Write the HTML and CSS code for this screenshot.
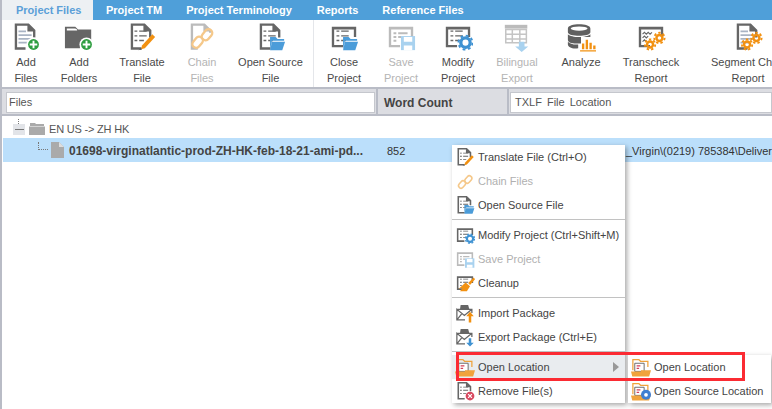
FILE: index.html
```html
<!DOCTYPE html>
<html lang="en">
<head>
<meta charset="utf-8">
<title>Project Files</title>
<link rel="stylesheet" href="styles.css">
</head>
<body>
<svg class="defs" width="0" height="0" aria-hidden="true">
  <defs>
    <symbol id="doc" viewBox="0 0 32 32"><path d="M4 1.500h15l7 7v8h-2.500v-6.500h-6v-6h-11v23h9v2.500h-11.500z" fill="#666"/></symbol>
    <symbol id="lines" viewBox="0 0 32 32"><path d="M8 9h8v2h-8zM8 13h14v2h-14zM8 17h14v2h-14zM8 21h10v2h-10z" fill="#a9b4c4"/></symbol>
    <symbol id="plus" viewBox="0 0 32 32"><circle cx="24" cy="24" r="7.500" fill="#fff"/><circle cx="24" cy="24" r="5.800" fill="#2f9e41"/><path d="M23 20h2v3h3v2h-3v3h-2v-3h-3v-2h3z" fill="#fff"/></symbol>
    <symbol id="form" viewBox="0 0 32 32"><path d="M8 9h3v1.500h-3zM13 9h8v1.500h-8zM8 14h3v1.500h-3zM13 14h8v1.500h-8zM8 19h3v1.500h-3zM13 19h5v1.500h-5z" fill="#666"/></symbol>
    <symbol id="pencil" viewBox="0 0 32 32"><path d="M27 13l3 3-11 12-4 1 1-4z" fill="#f29111"/><path d="M12 30l3-2 1 1z" fill="#555"/></symbol>
    <symbol id="link" viewBox="0 0 32 32"><g fill="none" stroke="#f5c88a" stroke-width="2.500"><rect x="5" y="18" width="13" height="8" rx="4" transform="rotate(-50 11 22)"/><rect x="15" y="10" width="13" height="8" rx="4" transform="rotate(-50 21 14)"/></g></symbol>
    <symbol id="bluefolder" viewBox="0 0 32 32"><path d="M15 16h6l2 2h7v2h-13l-2 9zM17 21h14l-3 9h-13z" fill="#4b9cd9"/></symbol>
    <symbol id="win" viewBox="0 0 32 32"><path d="M3 5h26v3h-26zM3 8h2.500v19h-2.500zM26.500 8h2.500v8h-2.500zM3 24.500h12v2.500h-12z" fill="#666"/></symbol>
    <symbol id="wingrey" viewBox="0 0 32 32"><path d="M3 5h26v3h-26zM3 8h2.500v19h-2.500zM26.500 8h2.500v8h-2.500zM3 24.500h12v2.500h-12z" fill="#bbb"/></symbol>
    <symbol id="formgrey" viewBox="0 0 32 32"><path d="M8 11h3v2h-3zM13 11h10v2h-10zM8 15h3v2h-3zM13 15h3v2h-3zM8 19h3v2h-3z" fill="#bbb"/></symbol>
    <symbol id="save" viewBox="0 0 32 32"><path d="M16 15h15v15h-15z" fill="#a9d2ef"/><path d="M19 16h9v5h-9zM19 25h9v5h-9z" fill="#fff"/></symbol>
    <symbol id="gear" viewBox="0 0 32 32"><circle cx="24" cy="22" r="5" fill="none" stroke="#3f92d2" stroke-width="3.500"/><circle cx="24" cy="22" r="7.500" fill="none" stroke="#3f92d2" stroke-width="2" stroke-dasharray="3 2.900"/></symbol>
    <symbol id="table" viewBox="0 0 32 32"><path d="M3 3h24v4h-24z" fill="#bbb"/><path d="M4 8h22v14h-22zM11 8v14M19 8v14M4 13h22M4 18h22" fill="none" stroke="#c4c4c4" stroke-width="1.600"/><path d="M18 21h6v5h4l-7 6-7-6h4z" fill="#a9d2ef"/></symbol>
    <symbol id="db" viewBox="0 0 32 32"><path d="M2 7c0-6 24-6 24 0v4c0 5-24 5-24 0zM2 13c4 4 20 4 24 0v3h-10v7h-5c-5 0-9-1-9-4zM2 21c2 2 5 3 9 3h2v4c-6 1-11-1-11-4z" fill="#606060"/><ellipse cx="14" cy="7" rx="9" ry="2.300" fill="#fff"/><path d="M15 30h17v1.500h-17zM17 23h2.500v6h-2.500zM21 19h2.500v10h-2.500zM25 22h2.500v7h-2.500zM29 25h2.500v4h-2.500z" fill="#f29111"/></symbol>
    <symbol id="gears" viewBox="0 0 32 32"><g fill="none" stroke="#f29111"><circle cx="15" cy="24" r="3.200" stroke-width="2.600"/><circle cx="15" cy="24" r="5.500" stroke-width="2" stroke-dasharray="2.500 2.300"/><circle cx="25" cy="17" r="3.200" stroke-width="2.600"/><circle cx="25" cy="17" r="5.500" stroke-width="2" stroke-dasharray="2.500 2.300"/></g></symbol>
    <symbol id="waves" viewBox="0 0 32 32"><path d="M7 13l2-2 2 2 2-2 2 2 2-2M7 17l2-2 2 2 2-2M7 21l2-2 2 2" fill="none" stroke="#666" stroke-width="1.200"/></symbol>
    <symbol id="broom" viewBox="0 0 32 32"><path d="M30 7l-9 9 3 3 8-9z" fill="#f29111"/><path d="M17 15l7 6-5 8H8l4-5-6 1z" fill="#f29111"/></symbol>
    <symbol id="mail" viewBox="0 0 32 32"><path d="M8 10l1-7h12l2 7z" fill="#666"/><path d="M3 10h24v6M16 27h-13v-17l12 10 12-10M3 27l8-10" fill="none" stroke="#666" stroke-width="2"/></symbol>
    <symbol id="up" viewBox="0 0 32 32"><path d="M24 14l6 7h-4v10h-4v-10h-4z" fill="#f29111"/></symbol>
    <symbol id="down" viewBox="0 0 32 32"><path d="M22 18h4v7h4l-6 6-6-6h4z" fill="#3f92d2"/></symbol>
    <symbol id="folderopen" viewBox="0 0 32 32"><path d="M2 3h11l3 3h12v10h-2V8H15l-3-3H4v16h-2z" fill="#f0a33c"/><path d="M6 10h15v13h-15z" fill="#fff" stroke="#666" stroke-width="1.500"/><path d="M9 13h6v2h-6zM9 17h4v2h-4z" fill="#d4405a"/><path d="M16 21h16l-3 10h-27l-2-8h16z" fill="#f0a33c"/></symbol>
    <symbol id="del" viewBox="0 0 32 32"><circle cx="24" cy="24" r="7" fill="#d8485f"/><path d="M21 21l6 6M27 21l-6 6" stroke="#fff" stroke-width="2"/></symbol>
    <symbol id="pin" viewBox="0 0 32 32"><circle cx="24" cy="22" r="8" fill="#3f7fd2"/><circle cx="24" cy="22" r="3" fill="#fff"/></symbol>
  </defs>
</svg>

<div class="app">
  <nav class="tabs">
    <span class="tab active">Project Files</span>
    <span class="tab">Project TM</span>
    <span class="tab">Project Terminology</span>
    <span class="tab">Reports</span>
    <span class="tab">Reference Files</span>
  </nav>

  <div class="toolbar">
    <div class="tool w48"><svg class="ticon"><use href="#doc"/><use href="#lines"/><use href="#plus"/></svg><span>Add<br>Files</span></div>
    <div class="tool w58"><svg class="ticon" viewBox="0 0 32 32"><path d="M1 5h11l3 3h14v14h-12v6h-16z" fill="#666"/><path d="M3 9h11v-1l-2-1h-9z" fill="#fff"/><use href="#plus"/></svg><span>Add<br>Folders</span></div>
    <div class="tool w68"><svg class="ticon"><use href="#doc"/><use href="#form"/><use href="#pencil"/></svg><span>Translate<br>File</span></div>
    <div class="tool w52 off"><svg class="ticon" viewBox="0 0 32 32"><path d="M4 1.500h15l7 7v3h-2.500v-1.500h-6v-6h-11v23h5v2.500h-7.500z" fill="#bbb"/><use href="#link"/></svg><span>Chain<br>Files</span></div>
    <div class="tool w86 sep"><svg class="ticon"><use href="#doc"/><use href="#form"/><use href="#bluefolder"/></svg><span>Open Source<br>File</span></div>
    <div class="tool w60"><svg class="ticon"><use href="#win"/><use href="#form"/><use href="#bluefolder"/></svg><span>Close<br>Project</span></div>
    <div class="tool w54 off"><svg class="ticon"><use href="#wingrey"/><use href="#formgrey"/><use href="#save"/></svg><span>Save<br>Project</span></div>
    <div class="tool w60"><svg class="ticon"><use href="#win"/><use href="#form"/><use href="#gear"/></svg><span>Modify<br>Project</span></div>
    <div class="tool w58 off"><svg class="ticon"><use href="#table"/></svg><span>Bilingual<br>Export</span></div>
    <div class="tool w70"><svg class="ticon"><use href="#db"/></svg><span>Analyze</span></div>
    <div class="tool w70"><svg class="ticon"><use href="#win"/><use href="#waves"/><use href="#gears"/></svg><span>Transcheck<br>Report</span></div>
    <div class="tool w124"><svg class="ticon"><use href="#doc"/><use href="#lines"/><use href="#gears"/></svg><span>Segment Chart<br>Report</span></div>
  </div>

  <div class="head">
    <div class="hcell files"><span class="field">Files</span></div>
    <div class="hcell count">Word Count</div>
    <div class="hcell loc"><span class="field spaced">TXLF File Location</span></div>
  </div>

  <div class="tree">
    <div class="node group">
      <span class="minus"></span>
      <svg class="folder" viewBox="0 0 16 12"><path d="M1 0h5l1 1h8v2h-14zM0 3.500h16v8.500h-16z" fill="#aaa"/></svg>
      <span>EN US -&gt; ZH HK</span>
    </div>
    <div class="node row">
      <span class="elbow"></span>
      <svg class="file" viewBox="0 0 13 16"><path d="M0 0h8l5 5v11h-13z" fill="#aaa"/><path d="M8 0l5 5h-5z" fill="#ddd"/></svg>
      <b class="name">01698-virginatlantic-prod-ZH-HK-feb-18-21-ami-pd...</b>
      <span class="wc">852</span>
      <span class="path">_Virgin\(0219) 785384\Deliverables</span>
    </div>
  </div>

  <div class="edge"></div>

  <div class="menu main">
    <div class="item"><svg class="micon"><use href="#doc"/><use href="#form"/><use href="#pencil"/></svg>Translate File (Ctrl+O)</div>
    <div class="item off"><svg class="micon"><use href="#link"/></svg>Chain Files</div>
    <div class="item"><svg class="micon"><use href="#doc"/><use href="#form"/><use href="#bluefolder"/></svg>Open Source File</div>
    <hr>
    <div class="item"><svg class="micon"><use href="#win"/><use href="#form"/><use href="#gear"/></svg>Modify Project (Ctrl+Shift+M)</div>
    <div class="item off"><svg class="micon"><use href="#wingrey"/><use href="#formgrey"/><use href="#save"/></svg>Save Project</div>
    <div class="item"><svg class="micon"><use href="#win"/><use href="#form"/><use href="#broom"/></svg>Cleanup</div>
    <hr>
    <div class="item"><svg class="micon"><use href="#mail"/><use href="#up"/></svg>Import Package</div>
    <div class="item"><svg class="micon"><use href="#mail"/><use href="#down"/></svg>Export Package (Ctrl+E)</div>
    <hr>
    <div class="item hot"><svg class="micon"><use href="#folderopen"/></svg>Open Location<i class="arrow"></i></div>
    <div class="item"><svg class="micon"><use href="#doc"/><use href="#form"/><use href="#del"/></svg>Remove File(s)</div>
  </div>

  <div class="menu sub">
    <div class="item"><svg class="micon"><use href="#folderopen"/></svg>Open Location</div>
    <div class="item"><svg class="micon"><use href="#folderopen"/><use href="#pin"/></svg>Open Source Location</div>
  </div>

  <div class="redbox"></div>
</div>
</body>
</html>
```
FILE: styles.css
```css
* { box-sizing: border-box; }
html, body { margin: 0; padding: 0; }
body { width: 772px; height: 409px; overflow: hidden; background: #fff; font-family: "Liberation Sans", Arial, sans-serif; font-size: 11px; color: #444; }
.defs { position: absolute; }
.app { position: relative; width: 772px; height: 409px; overflow: hidden; border-left: 2px solid #b9bcc6; }
.edge { position: absolute; left: -2px; top: 128px; width: 2px; height: 62px; background: #4f9fd9; }

.tabs { display: flex; height: 20px; margin-left: -2px; background: #4f9fd9; }
.tab { padding: 0 12px; line-height: 20px; font-weight: bold; font-size: 11px; color: #fff; white-space: nowrap; }
.tab.active { width: 93px; margin-right: 1px; padding-left: 16px; background: #edf0f3; color: #5b9fd8; }
.tab:nth-child(4) { margin-left: 1px; }

.toolbar { display: flex; height: 69px; margin-left: -2px; padding-left: 2px; border-bottom: 2px solid #b9bcc6; overflow: hidden; }
.tool { flex: none; display: flex; flex-direction: column; align-items: center; text-align: center; font-size: 11px; line-height: 16px; color: #4a4a4a; }
.tool.off { color: #b4b4b4; }
.tool.sep { border-right: 1px solid #e4e6ea; }
.ticon { flex: none; width: 30px; height: 30px; margin: 2px 0 2px; }
.w48 { width: 48px; }
.w52 { width: 52px; }
.w54 { width: 54px; }
.w58 { width: 58px; }
.w60 { width: 60px; }
.w68 { width: 68px; }
.w70 { width: 70px; }
.w86 { width: 86px; }
.w124 { width: 124px; }

.head { display: flex; height: 27px; background: #dcdde2; border-bottom: 2px solid #b9bcc6; }
.hcell { height: 25px; display: flex; align-items: center; }
.files { width: 376px; padding: 3px 1px 1px 4px; border-right: 2px solid #b9bcc6; }
.count { width: 131px; padding: 2px 0 0 6px; font-size: 12px; font-weight: bold; color: #444; border-right: 2px solid #b9bcc6; }
.loc { flex: 1; padding: 3px 0 1px 1px; }
.field { display: block; width: 100%; height: 21px; line-height: 19px; padding-left: 2px; background: #fff; border: 1px solid #c5c7cd; font-size: 11px; color: #555; }
.spaced { padding-left: 4px; word-spacing: 2px; }

.node { position: relative; display: flex; align-items: center; white-space: nowrap; }
.group { height: 22px; padding: 4px 0 0 11px; font-size: 11px; letter-spacing: -.2px; color: #555; }
.minus { position: relative; width: 12px; height: 11px; margin-right: 4px; background: #e2e4e8; }
.minus::after { content: ""; position: absolute; left: 2px; right: 1px; top: 5px; height: 1px; background: #777; }
.minus::before { content: ""; position: absolute; left: 5px; top: -5px; height: 5px; border-left: 1px dotted #777; }
.folder { width: 16px; height: 12px; margin-right: 4px; }
.row { height: 24px; margin-left: 1px; padding-left: 35px; background: #bbdffb; color: #333; overflow: hidden; }
.elbow { flex: none; width: 10px; height: 8px; margin: -9px 3px 0 0; border-left: 1px dotted #777; border-bottom: 1px dotted #777; }
.file { flex: none; width: 13px; height: 16px; margin-right: 5px; }
.name { width: 298px; flex: none; padding-top: 2px; font-size: 12px; color: #444; }
.wc { width: 259px; flex: none; padding: 2px 0 0 20px; }
.path { padding-top: 2px; font-size: 11px; }

.menu { position: absolute; background: #fff; box-shadow: 2px 2px 5px rgba(0, 0, 0, .35); }
.main { left: 450px; top: 145px; width: 173px; }
.sub { left: 626px; top: 355px; width: 143px; }
.item { position: relative; display: flex; align-items: center; height: 24px; padding-left: 3px; font-size: 11px; color: #444; white-space: nowrap; }
.item.off { color: #b0b0b0; }
.item.hot { background: #e9ecef; }
.micon { flex: none; width: 20px; height: 20px; margin-right: 3px; }
.menu hr { margin: 2px 0 3px; height: 1px; border: 0; background: #c2c2c2; }
.arrow { position: absolute; right: 6px; top: 7px; width: 0; height: 0; border-left: 6px solid #999; border-top: 5px solid transparent; border-bottom: 5px solid transparent; }

.redbox { position: absolute; left: 454px; top: 352px; width: 289px; height: 29px; border: 3px solid #fb2b33; }
```
